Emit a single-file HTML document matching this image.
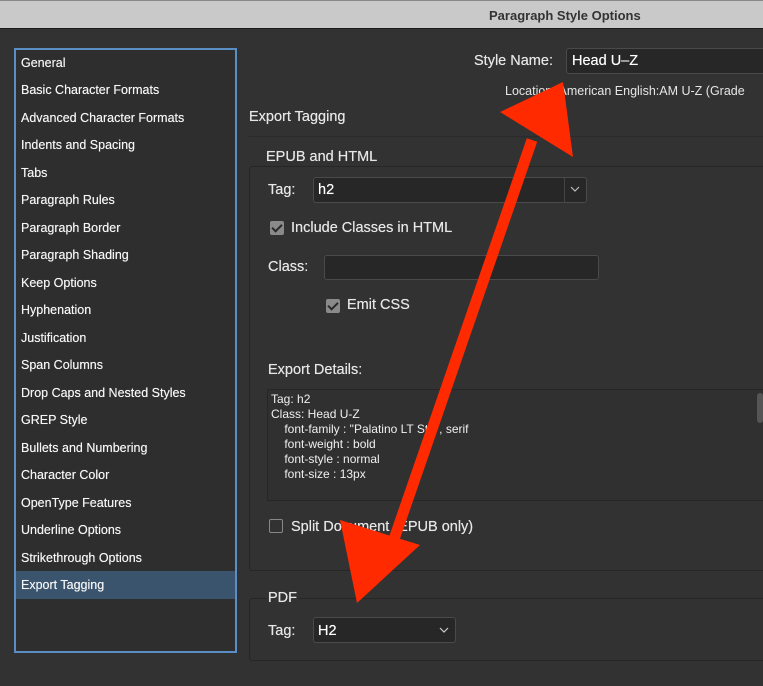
<!DOCTYPE html>
<html><head><style>
*{margin:0;padding:0;box-sizing:border-box}
body{width:763px;height:686px;background:#323232;font-family:"Liberation Sans",sans-serif;color:#e6e6e6;position:relative;overflow:hidden}
.a{position:absolute;white-space:nowrap}
#title{left:0;top:0;width:763px;height:29px;background:#c9c9c9;border-bottom:1px solid #1a1a1a;border-top:1px solid #888}
#title span{position:absolute;left:489px;top:7px;font-size:13px;font-weight:bold;color:#333}
#side{left:14px;top:48px;width:223px;height:605px;border:2px solid #5b8ec4;background:#2e2e2e}
.it{position:absolute;left:5px;font-size:12.5px;color:#f4f4f4;text-shadow:0 0 0.4px #fff}
#sel{position:absolute;left:0;top:521px;width:219px;height:28px;background:#3b546e}
.grp{position:absolute;border:1px solid #262626;border-radius:3px}
.box{position:absolute;background:#272727;border:1px solid #4a4a4a;border-radius:3px}
.chk{position:absolute;width:14px;height:14px;border-radius:2px;background:#8a8a8a}
.chk:after{content:"";position:absolute;left:4px;top:1px;width:4px;height:8px;border:solid #2a2a2a;border-width:0 2px 2px 0;transform:rotate(45deg)}
.l{font-size:14.5px;text-shadow:0 0 0.4px #fff}
</style></head><body>
<div id="title" class="a"><span>Paragraph Style Options</span></div>
<div id="side" class="a">
<div id="sel"></div>
<div class="it" style="top:6px">General</div>
<div class="it" style="top:33px">Basic Character Formats</div>
<div class="it" style="top:61px">Advanced Character Formats</div>
<div class="it" style="top:88px">Indents and Spacing</div>
<div class="it" style="top:116px">Tabs</div>
<div class="it" style="top:143px">Paragraph Rules</div>
<div class="it" style="top:171px">Paragraph Border</div>
<div class="it" style="top:198px">Paragraph Shading</div>
<div class="it" style="top:226px">Keep Options</div>
<div class="it" style="top:253px">Hyphenation</div>
<div class="it" style="top:281px">Justification</div>
<div class="it" style="top:308px">Span Columns</div>
<div class="it" style="top:336px">Drop Caps and Nested Styles</div>
<div class="it" style="top:363px">GREP Style</div>
<div class="it" style="top:391px">Bullets and Numbering</div>
<div class="it" style="top:418px">Character Color</div>
<div class="it" style="top:446px">OpenType Features</div>
<div class="it" style="top:473px">Underline Options</div>
<div class="it" style="top:501px">Strikethrough Options</div>
<div class="it" style="top:528px">Export Tagging</div>
</div>
<div class="a l" style="left:474px;top:53px">Style Name:</div>
<div class="box" style="left:566px;top:48px;width:210px;height:26px"></div>
<div class="a l" style="left:572px;top:53px;color:#fff">Head U–Z</div>
<div class="a" style="left:505px;top:84px;font-size:12.5px">Location: American English:AM U-Z (Grade</div>
<div class="a l" style="left:249px;top:109px">Export Tagging</div>
<div class="a" style="left:249px;top:136px;width:520px;height:1px;background:#2a2a2a"></div>
<div class="grp" style="left:249px;top:166px;width:530px;height:405px"></div>
<div class="a l" style="left:262px;top:149px;background:#323232;padding:0 4px">EPUB and HTML</div>
<div class="a l" style="left:268px;top:182px">Tag:</div>
<div class="box" style="left:313px;top:177px;width:274px;height:26px"></div>
<div class="a" style="left:564px;top:178px;width:1px;height:24px;background:#444"></div>
<svg class="a" style="left:570px;top:186px" width="10" height="6"><path d="M1 1 L5 5 L9 1" stroke="#bbb" stroke-width="1.2" fill="none"/></svg>
<div class="a l" style="left:318px;top:182px;color:#fff">h2</div>
<div class="chk" style="left:270px;top:221px"></div>
<div class="a l" style="left:291px;top:220px">Include Classes in HTML</div>
<div class="a l" style="left:268px;top:259px">Class:</div>
<div class="box" style="left:324px;top:255px;width:275px;height:25px"></div>
<div class="chk" style="left:326px;top:299px"></div>
<div class="a l" style="left:347px;top:297px">Emit CSS</div>
<div class="a l" style="left:268px;top:362px">Export Details:</div>
<div class="a" style="left:267px;top:389px;width:500px;height:112px;border:1px solid #262626;background:#303030"></div>
<div class="a" style="left:757px;top:393px;width:6px;height:30px;background:#555;border-radius:3px"></div>
<div class="a" style="left:271px;top:392px;font-size:12px;line-height:15px;color:#f0f0f0">Tag: h2<br>Class: Head U-Z<br>&nbsp;&nbsp;&nbsp;&nbsp;font-family : "Palatino LT Std", serif<br>&nbsp;&nbsp;&nbsp;&nbsp;font-weight : bold<br>&nbsp;&nbsp;&nbsp;&nbsp;font-style : normal<br>&nbsp;&nbsp;&nbsp;&nbsp;font-size : 13px</div>
<div class="a" style="left:269px;top:519px;width:14px;height:14px;border:1px solid #888;border-radius:2px"></div>
<div class="a l" style="left:291px;top:519px">Split Document (EPUB only)</div>
<div class="grp" style="left:249px;top:598px;width:530px;height:63px"></div>
<div class="a l" style="left:267px;top:590px;background:#323232;padding:0 1px">PDF</div>
<div class="a l" style="left:268px;top:623px">Tag:</div>
<div class="box" style="left:313px;top:617px;width:143px;height:26px"></div>
<div class="a l" style="left:318px;top:623px;color:#fff">H2</div>
<svg class="a" style="left:439px;top:627px" width="10" height="6"><path d="M1 1 L5 5 L9 1" stroke="#ccc" stroke-width="1.2" fill="none"/></svg>
<svg class="a" style="left:0;top:0" width="763" height="686">
<line x1="392" y1="545" x2="532" y2="140" stroke="#ff2a00" stroke-width="11"/>
<polygon points="563,82 573,157 500,112" fill="#ff2a00"/>
<polygon points="357,603 340,520 420,545" fill="#ff2a00"/>
</svg>
</body></html>
